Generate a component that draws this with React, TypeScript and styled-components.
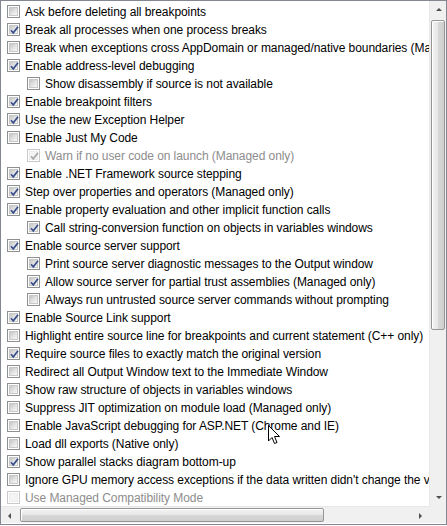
import React, { FC } from 'react';
import styled, { createGlobalStyle } from 'styled-components';

const GlobalStyle = createGlobalStyle`
  html, body {
    margin: 0;
    padding: 0;
    background: #ffffff;
  }
  body {
    font-family: "Liberation Sans", Arial, sans-serif;
    font-size: 12px;
  }
`;

const Frame = styled.div`
  position: relative;
  width: 447px;
  height: 525px;
  box-sizing: border-box;
  border: 1px solid #828790;
  display: grid;
  grid-template-columns: 428px 17px;
  grid-template-rows: 505px 17px;
  background: #ffffff;
  overflow: hidden;
`;

const List = styled.div`
  padding-top: 1px;
  overflow: hidden;
  display: flex;
  flex-direction: column;
`;

const Row = styled.label<{ $level: number }>`
  display: flex;
  align-items: center;
  height: 18px;
  padding-left: ${p => 6 + p.$level * 20}px;
  white-space: nowrap;
  flex-shrink: 0;
`;

const Box = styled.span<{ $disabled?: boolean }>`
  width: 13px;
  height: 13px;
  flex-shrink: 0;
  box-sizing: border-box;
  border: 1px solid ${p => (p.$disabled ? '#c9c9c9' : '#8e8f8f')};
  padding: 1px;
  background: #ffffff;
  margin-right: 5px;
  position: relative;
  & > span {
    display: block;
    width: 100%;
    height: 100%;
    box-sizing: border-box;
    border: 1px solid ${p => (p.$disabled ? '#ececec' : '#c8c8c8')};
    background: ${p =>
      p.$disabled
        ? '#f4f4f4'
        : 'linear-gradient(135deg, #c4c4c4 0%, #e4e4e4 55%, #f7f7f7 100%)'};
  }
  svg {
    position: absolute;
    left: 0;
    top: 0;
  }
`;

const Label = styled.span<{ $disabled?: boolean }>`
  color: ${p => (p.$disabled ? '#8d8d8d' : '#000000')};
  line-height: 18px;
  padding-top: 1px;
  letter-spacing: -0.07px;
`;

const VScroll = styled.div`
  background: #f0f0f0;
  border-left: 1px solid #e7e7e7;
  display: flex;
  flex-direction: column;
`;

const HScroll = styled.div`
  background: #f0f0f0;
  border-top: 1px solid #e7e7e7;
  display: flex;
  flex-direction: row;
`;

const Corner = styled.div`
  background: #f0f0f0;
`;

const ArrowBtn = styled.div`
  width: 17px;
  height: 17px;
  flex-shrink: 0;
  display: flex;
  align-items: center;
  justify-content: center;
`;

const Track = styled.div`
  flex: 1;
  display: flex;
  padding: 2px 1px;
`;

const HTrack = styled(Track)`
  padding: 1px 2px;
`;

const VThumb = styled.div`
  width: 100%;
  height: 310px;
  box-sizing: border-box;
  border: 1px solid #959595;
  border-radius: 2px;
  background: linear-gradient(to right, #f3f3f3 0%, #e8e8e8 45%, #d6d6d6 55%, #cfcfcf 100%);
  box-shadow: inset 1px 1px 0 #ffffff;
`;

const HThumb = styled.div`
  height: 100%;
  width: 304px;
  box-sizing: border-box;
  border: 1px solid #959595;
  border-radius: 2px;
  background: linear-gradient(to bottom, #f3f3f3 0%, #e8e8e8 45%, #d6d6d6 55%, #cfcfcf 100%);
  box-shadow: inset 1px 1px 0 #ffffff;
`;

const Cursor = styled.svg`
  position: absolute;
  left: 267px;
  top: 424px;
`;

interface Item {
  text: string;
  level?: number;
  checked?: boolean;
  disabled?: boolean;
}

const items: Item[] = [
  { text: 'Ask before deleting all breakpoints' },
  { text: 'Break all processes when one process breaks', checked: true },
  { text: 'Break when exceptions cross AppDomain or managed/native boundaries (Managed only)' },
  { text: 'Enable address-level debugging', checked: true },
  { text: 'Show disassembly if source is not available', level: 1 },
  { text: 'Enable breakpoint filters', checked: true },
  { text: 'Use the new Exception Helper', checked: true },
  { text: 'Enable Just My Code' },
  { text: 'Warn if no user code on launch (Managed only)', level: 1, checked: true, disabled: true },
  { text: 'Enable .NET Framework source stepping', checked: true },
  { text: 'Step over properties and operators (Managed only)', checked: true },
  { text: 'Enable property evaluation and other implicit function calls', checked: true },
  { text: 'Call string-conversion function on objects in variables windows', level: 1, checked: true },
  { text: 'Enable source server support', checked: true },
  { text: 'Print source server diagnostic messages to the Output window', level: 1, checked: true },
  { text: 'Allow source server for partial trust assemblies (Managed only)', level: 1, checked: true },
  { text: 'Always run untrusted source server commands without prompting', level: 1 },
  { text: 'Enable Source Link support', checked: true },
  { text: 'Highlight entire source line for breakpoints and current statement (C++ only)' },
  { text: 'Require source files to exactly match the original version', checked: true },
  { text: 'Redirect all Output Window text to the Immediate Window' },
  { text: 'Show raw structure of objects in variables windows' },
  { text: 'Suppress JIT optimization on module load (Managed only)' },
  { text: 'Enable JavaScript debugging for ASP.NET (Chrome and IE)' },
  { text: 'Load dll exports (Native only)' },
  { text: 'Show parallel stacks diagram bottom-up', checked: true },
  { text: "Ignore GPU memory access exceptions if the data written didn't change the value" },
  { text: 'Use Managed Compatibility Mode', disabled: true },
];

const Check: FC<{ disabled?: boolean }> = ({ disabled }) => (
  <svg width="13" height="13" viewBox="0 0 13 13">
    <path
      d="M3 6.2 L5.3 8.8 L10 2.8"
      fill="none"
      stroke={disabled ? '#a8a8a8' : '#3b4f8c'}
      strokeWidth="1.7"
      strokeLinejoin="miter"
    />
  </svg>
);

const OptionRow: FC<{ item: Item }> = ({ item }) => (
  <Row $level={item.level ?? 0}>
    <Box $disabled={item.disabled}>
      <span />
      {item.checked && <Check disabled={item.disabled} />}
    </Box>
    <Label $disabled={item.disabled}>{item.text}</Label>
  </Row>
);

const Arrow: FC<{ dir: 'up' | 'down' | 'left' | 'right' }> = ({ dir }) => {
  const pts = {
    up: '1,4 4,1 7,4',
    down: '1,1 4,4 7,1',
    left: '4,1 1,4 4,7',
    right: '1,1 4,4 1,7',
  }[dir];
  const vertical = dir === 'up' || dir === 'down';
  return (
    <svg width={vertical ? 8 : 5} height={vertical ? 5 : 8} viewBox={vertical ? '0 0 8 5' : '0 0 5 8'}>
      <polygon points={pts} fill="#4f4f4f" />
    </svg>
  );
};

const App: FC = () => (
  <>
    <GlobalStyle />
    <Frame>
      <List>
        {items.map((item, i) => (
          <OptionRow key={i} item={item} />
        ))}
      </List>
      <VScroll>
        <ArrowBtn><Arrow dir="up" /></ArrowBtn>
        <Track><VThumb /></Track>
        <ArrowBtn><Arrow dir="down" /></ArrowBtn>
      </VScroll>
      <HScroll>
        <ArrowBtn><Arrow dir="left" /></ArrowBtn>
        <HTrack><HThumb /></HTrack>
        <ArrowBtn><Arrow dir="right" /></ArrowBtn>
      </HScroll>
      <Corner />
      <Cursor width="13" height="20" viewBox="0 0 13 20">
        <path
          d="M0.5 0.5 L0.5 16 L4 12.5 L6.5 18.5 L9 17.5 L6.5 11.5 L11.5 11.5 Z"
          fill="#ffffff"
          stroke="#000000"
          strokeWidth="1"
          strokeLinejoin="miter"
        />
      </Cursor>
    </Frame>
  </>
);

export default App;
